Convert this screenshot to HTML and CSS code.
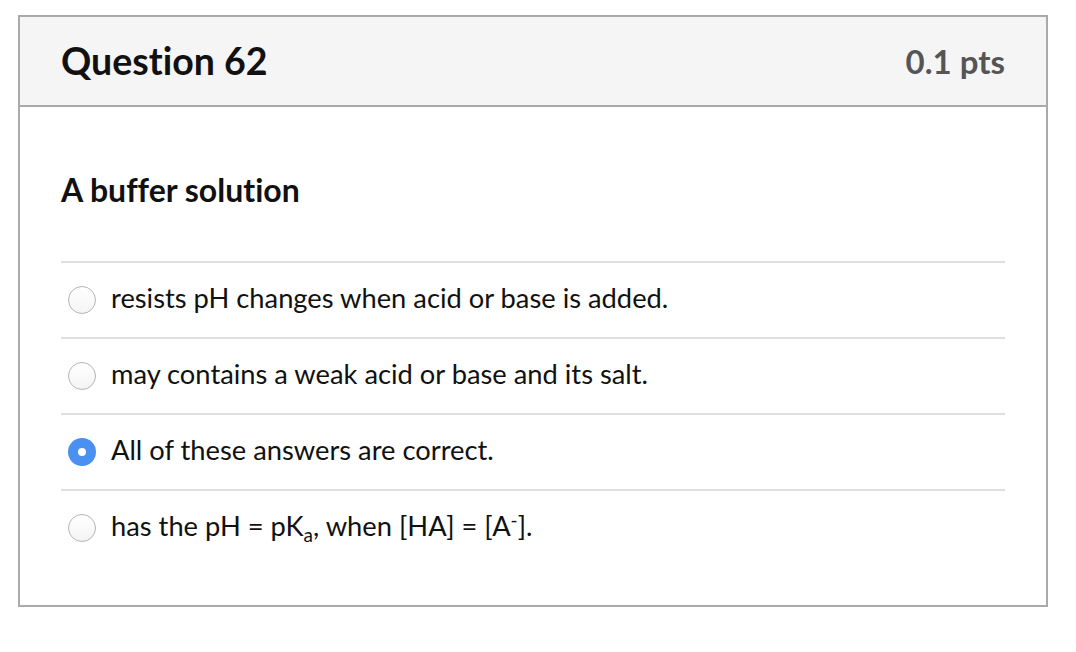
FILE: index.html
```html
<!DOCTYPE html>
<html lang="en">
<head>
<meta charset="utf-8">
<title>Question 62</title>
<link rel="stylesheet" href="styles.css">
</head>
<body>
<div class="quiz-card">
  <div class="quiz-header">
    <h2 class="quiz-title">Question 62</h2>
    <span class="quiz-points">0.1 pts</span>
  </div>
  <div class="quiz-body">
    <p class="quiz-question">A buffer solution</p>
    <div class="answers">
      <label class="answer">
        <span class="radio"></span>
        <span class="answer-text">resists pH changes when acid or base is added.</span>
      </label>
      <label class="answer">
        <span class="radio"></span>
        <span class="answer-text">may contains a weak acid or base and its salt.</span>
      </label>
      <label class="answer">
        <span class="radio radio-checked"></span>
        <span class="answer-text">All of these answers are correct.</span>
      </label>
      <label class="answer">
        <span class="radio"></span>
        <span class="answer-text">has the pH = pK<sub class="sub">a</sub>, when [HA] = [A<sup class="sup">-</sup>].</span>
      </label>
    </div>
  </div>
</div>
</body>
</html>
```

FILE: styles.css
```css
html, body {
  margin: 0;
  padding: 0;
  background: #ffffff;
}

body {
  font-family: Lato, "Open Sans", "Liberation Sans", sans-serif;
  font-variant-ligatures: none;
  color: #111111;
}

.quiz-card {
  box-sizing: border-box;
  width: 1030px;
  height: 592px;
  margin: 15px 0 0 18px;
  border: 2px solid #aaaaaa;
}

.quiz-header {
  box-sizing: border-box;
  height: 90px;
  background: #f5f5f5;
  border-bottom: 2px solid #aaaaaa;
  padding: 0 41px;
  display: flex;
  align-items: center;
  justify-content: space-between;
}

.quiz-title {
  margin: 0;
  font-size: 37.5px;
  line-height: 44px;
  font-weight: 700;
  color: #111111;
}

.quiz-points {
  font-size: 33px;
  line-height: 44px;
  font-weight: 700;
  color: #555555;
}

.quiz-body {
  padding: 0 41px;
}

.quiz-question {
  margin: 62px 0 50px;
  font-size: 32px;
  line-height: 42px;
  font-weight: 700;
  color: #111111;
}

.answers {
  display: flex;
  flex-direction: column;
}

.answer {
  box-sizing: border-box;
  height: 76px;
  border-top: 2px solid #dedede;
  display: flex;
  align-items: center;
  gap: 15px;
  padding-left: 7px;
  font-size: 27.3px;
  color: #111111;
}

.answer-text {
  line-height: 34px;
  padding-bottom: 4px;
}

.radio {
  box-sizing: border-box;
  width: 28px;
  height: 28px;
  border-radius: 50%;
  border: 1.5px solid #b5b5b5;
  background: linear-gradient(#ffffff, #f4f4f4);
  flex: none;
}

.radio-checked {
  border: none;
  background: #4a90f0;
  display: flex;
  align-items: center;
  justify-content: center;
}

.radio-checked::after {
  content: "";
  width: 8px;
  height: 8px;
  border-radius: 50%;
  background: #ffffff;
}

.sub {
  font-size: 19px;
  vertical-align: -6px;
  line-height: 0;
}

.sup {
  font-size: 19px;
  vertical-align: 9px;
  line-height: 0;
}
```
